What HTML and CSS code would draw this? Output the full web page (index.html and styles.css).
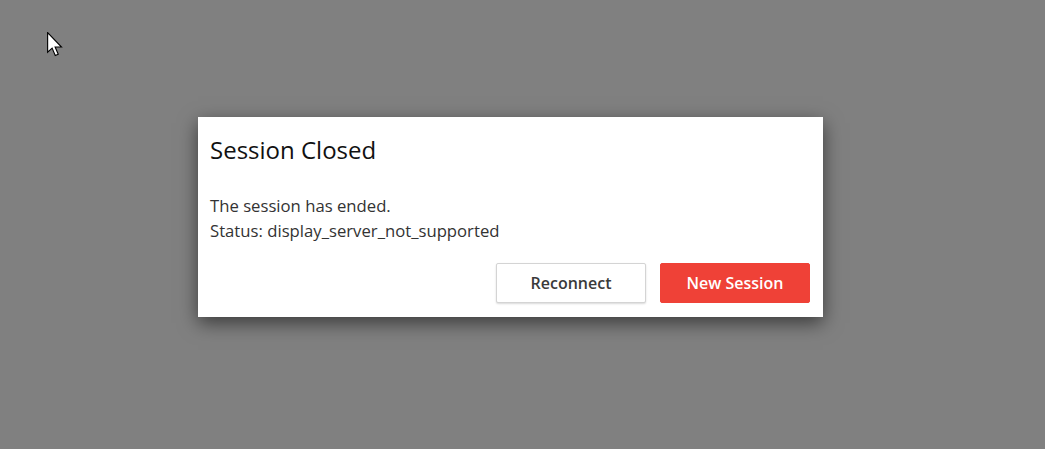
FILE: index.html
```html
<!DOCTYPE html>
<html>
<head>
<meta charset="utf-8">
<link rel="stylesheet" href="styles.css">
</head>
<body>
<div class="cursor">
<svg width="17" height="26" viewBox="0 0 13.6 20.8"><path d="M0.5 0.5 L0.5 16.2 L4.1 12.9 L6.6 18.8 L9 17.8 L6.5 12 L11.6 12 Z" fill="#fff" stroke="#000" stroke-width="0.9" stroke-linejoin="miter"/></svg>
</div>
<div class="dialog">
  <h2 class="title">Session Closed</h2>
  <div class="message">
    <p>The session has ended.</p>
    <p>Status: display_server_not_supported</p>
  </div>
  <div class="actions">
    <button class="btn btn-secondary">Reconnect</button>
    <button class="btn btn-primary">New Session</button>
  </div>
</div>
</body>
</html>
```
FILE: styles.css
```css
html, body {
  margin: 0;
  height: 100%;
}
body {
  background: #808080;
  font-family: "Open Sans", "Noto Sans", sans-serif;
  padding: 117px 0 0 198px;
  box-sizing: border-box;
  position: relative;
}
.cursor {
  position: absolute;
  left: 47px;
  top: 32px;
  line-height: 0;
}
.dialog {
  width: 625px;
  height: 200px;
  box-sizing: border-box;
  background: #fff;
  padding: 17px 13px 14px 12px;
  box-shadow: 0 6px 18px rgba(0,0,0,0.55);
  display: flex;
  flex-direction: column;
}
.title {
  margin: 0;
  font-size: 24px;
  font-weight: 400;
  line-height: 32px;
  color: #111;
}
.message {
  margin-top: 27px;
  font-size: 16.7px;
  line-height: 25px;
  color: #333;
}
.message p {
  margin: 0;
}
.actions {
  margin-top: auto;
  display: flex;
  justify-content: flex-end;
  gap: 14px;
}
.btn {
  width: 150px;
  height: 40px;
  font-family: inherit;
  font-size: 16px;
  font-weight: 600;
  border-radius: 2px;
  cursor: pointer;
}
.btn-secondary {
  background: #fff;
  color: #3a3a3a;
  border: 1px solid #d4d4d4;
  box-shadow: 0 1px 2px rgba(0,0,0,0.15);
}
.btn-primary {
  background: #ef4137;
  color: #fff;
  border: 1px solid #ef4137;
}
```
